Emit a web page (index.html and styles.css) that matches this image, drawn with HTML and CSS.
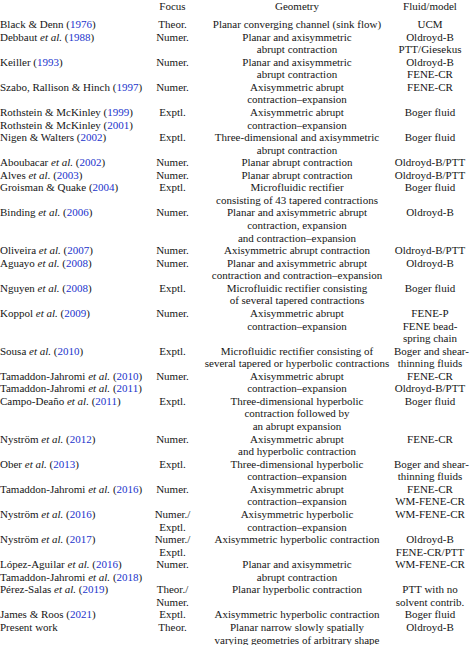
FILE: index.html
```html
<!DOCTYPE html>
<html>
<head>
<meta charset="utf-8">
<link rel="stylesheet" href="styles.css">
</head>
<body>
<div class="tbl">
  <div class="hd">
    <div class="c a"></div>
    <div class="c f">Focus</div>
    <div class="c g">Geometry</div>
    <div class="c m">Fluid/model</div>
  </div>

  <div class="row"><div class="c a">Black &amp; Denn (<span class="y">1976</span>)</div><div class="c f">Theor.</div><div class="c g">Planar converging channel (sink flow)</div><div class="c m">UCM</div></div>
  <div class="row"><div class="c a">Debbaut <i>et al.</i> (<span class="y">1988</span>)</div><div class="c f">Numer.</div><div class="c g">Planar and axisymmetric<br>abrupt contraction</div><div class="c m">Oldroyd-B<br>PTT/Giesekus</div></div>
  <div class="row"><div class="c a">Keiller (<span class="y">1993</span>)</div><div class="c f">Numer.</div><div class="c g">Planar and axisymmetric<br>abrupt contraction</div><div class="c m">Oldroyd-B<br>FENE-CR</div></div>
  <div class="row"><div class="c a">Szabo, Rallison &amp; Hinch (<span class="y">1997</span>)</div><div class="c f">Numer.</div><div class="c g">Axisymmetric abrupt<br>contraction–expansion</div><div class="c m">FENE-CR</div></div>
  <div class="row"><div class="c a">Rothstein &amp; McKinley (<span class="y">1999</span>)<br>Rothstein &amp; McKinley (<span class="y">2001</span>)</div><div class="c f">Exptl.</div><div class="c g">Axisymmetric abrupt<br>contraction–expansion</div><div class="c m">Boger fluid</div></div>
  <div class="row"><div class="c a">Nigen &amp; Walters (<span class="y">2002</span>)</div><div class="c f">Exptl.</div><div class="c g">Three-dimensional and axisymmetric<br>abrupt contraction</div><div class="c m">Boger fluid</div></div>
  <div class="row"><div class="c a">Aboubacar <i>et al.</i> (<span class="y">2002</span>)</div><div class="c f">Numer.</div><div class="c g">Planar abrupt contraction</div><div class="c m">Oldroyd-B/PTT</div></div>
  <div class="row"><div class="c a">Alves <i>et al.</i> (<span class="y">2003</span>)</div><div class="c f">Numer.</div><div class="c g">Planar abrupt contraction</div><div class="c m">Oldroyd-B/PTT</div></div>
  <div class="row"><div class="c a">Groisman &amp; Quake (<span class="y">2004</span>)</div><div class="c f">Exptl.</div><div class="c g">Microfluidic rectifier<br>consisting of 43 tapered contractions</div><div class="c m">Boger fluid</div></div>
  <div class="row"><div class="c a">Binding <i>et al.</i> (<span class="y">2006</span>)</div><div class="c f">Numer.</div><div class="c g">Planar and axisymmetric abrupt<br>contraction, expansion<br>and contraction–expansion</div><div class="c m">Oldroyd-B</div></div>
  <div class="row"><div class="c a">Oliveira <i>et al.</i> (<span class="y">2007</span>)</div><div class="c f">Numer.</div><div class="c g">Axisymmetric abrupt contraction</div><div class="c m">Oldroyd-B/PTT</div></div>
  <div class="row"><div class="c a">Aguayo <i>et al.</i> (<span class="y">2008</span>)</div><div class="c f">Numer.</div><div class="c g">Planar and axisymmetric abrupt<br>contraction and contraction–expansion</div><div class="c m">Oldroyd-B</div></div>
  <div class="row"><div class="c a">Nguyen <i>et al.</i> (<span class="y">2008</span>)</div><div class="c f">Exptl.</div><div class="c g">Microfluidic rectifier consisting<br>of several tapered contractions</div><div class="c m">Boger fluid</div></div>
  <div class="row"><div class="c a">Koppol <i>et al.</i> (<span class="y">2009</span>)</div><div class="c f">Numer.</div><div class="c g">Axisymmetric abrupt<br>contraction–expansion</div><div class="c m">FENE-P<br>FENE bead-<br>spring chain</div></div>
  <div class="row"><div class="c a">Sousa <i>et al.</i> (<span class="y">2010</span>)</div><div class="c f">Exptl.</div><div class="c g">Microfluidic rectifier consisting of<br>several tapered or hyperbolic contractions</div><div class="c m">Boger and shear-<br>thinning fluids</div></div>
  <div class="row"><div class="c a">Tamaddon-Jahromi <i>et al.</i> (<span class="y">2010</span>)<br>Tamaddon-Jahromi <i>et al.</i> (<span class="y">2011</span>)</div><div class="c f">Numer.</div><div class="c g">Axisymmetric abrupt<br>contraction–expansion</div><div class="c m">FENE-CR<br>Oldroyd-B/PTT</div></div>
  <div class="row"><div class="c a">Campo-Deaño <i>et al.</i> (<span class="y">2011</span>)</div><div class="c f">Exptl.</div><div class="c g">Three-dimensional hyperbolic<br>contraction followed by<br>an abrupt expansion</div><div class="c m">Boger fluid</div></div>
  <div class="row"><div class="c a">Nyström <i>et al.</i> (<span class="y">2012</span>)</div><div class="c f">Numer.</div><div class="c g">Axisymmetric abrupt<br>and hyperbolic contraction</div><div class="c m">FENE-CR</div></div>
  <div class="row"><div class="c a">Ober <i>et al.</i> (<span class="y">2013</span>)</div><div class="c f">Exptl.</div><div class="c g">Three-dimensional hyperbolic<br>contraction–expansion</div><div class="c m">Boger and shear-<br>thinning fluids</div></div>
  <div class="row"><div class="c a">Tamaddon-Jahromi <i>et al.</i> (<span class="y">2016</span>)</div><div class="c f">Numer.</div><div class="c g">Axisymmetric abrupt<br>contraction–expansion</div><div class="c m">FENE-CR<br>WM-FENE-CR</div></div>
  <div class="row"><div class="c a">Nyström <i>et al.</i> (<span class="y">2016</span>)</div><div class="c f">Numer./<br>Exptl.</div><div class="c g">Axisymmetric hyperbolic<br>contraction–expansion</div><div class="c m">WM-FENE-CR</div></div>
  <div class="row"><div class="c a">Nyström <i>et al.</i> (<span class="y">2017</span>)</div><div class="c f">Numer./<br>Exptl.</div><div class="c g">Axisymmetric hyperbolic contraction</div><div class="c m">Oldroyd-B<br>FENE-CR/PTT</div></div>
  <div class="row"><div class="c a">López-Aguilar <i>et al.</i> (<span class="y">2016</span>)<br>Tamaddon-Jahromi <i>et al.</i> (<span class="y">2018</span>)</div><div class="c f">Numer.</div><div class="c g">Planar and axisymmetric<br>abrupt contraction</div><div class="c m">WM-FENE-CR</div></div>
  <div class="row"><div class="c a">Pérez-Salas <i>et al.</i> (<span class="y">2019</span>)</div><div class="c f">Theor./<br>Numer.</div><div class="c g">Planar hyperbolic contraction</div><div class="c m">PTT with no<br>solvent contrib.</div></div>
  <div class="row"><div class="c a">James &amp; Roos (<span class="y">2021</span>)</div><div class="c f">Exptl.</div><div class="c g">Axisymmetric hyperbolic contraction</div><div class="c m">Boger fluid</div></div>
  <div class="row"><div class="c a">Present work</div><div class="c f">Theor.</div><div class="c g">Planar narrow slowly spatially<br>varying geometries of arbitrary shape</div><div class="c m">Oldroyd-B</div></div>
</div>
</body>
</html>
```

FILE: styles.css
```css
html, body {
  margin: 0;
  padding: 0;
  background: #ffffff;
}
body {
  font-family: "Liberation Serif", "Times New Roman", serif;
  font-size: 11px;
  line-height: 12.56px;
  color: #161616;
  overflow: hidden;
}
.tbl {
  width: 466px;
}
.hd, .row {
  display: grid;
  grid-template-columns: 145px 55px 194px 72px;
  align-items: start;
}
.hd {
  line-height: 13px;
  height: 13px;
  margin-bottom: 5px;
}
.c {
  white-space: nowrap;
}
.a {
  text-align: left;
}
.f, .g, .m {
  text-align: center;
}
.y {
  color: #2233cc;
}
i {
  font-style: italic;
}
```
